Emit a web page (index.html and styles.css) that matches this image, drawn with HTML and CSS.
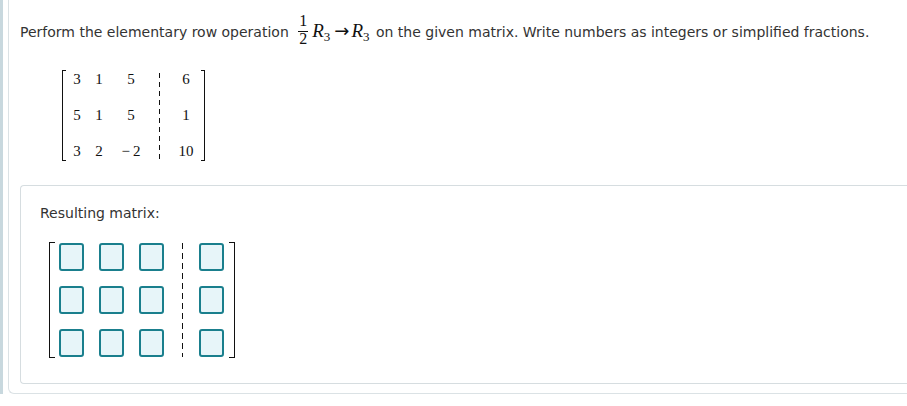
FILE: index.html
```html
<!DOCTYPE html>
<html>
<head>
<meta charset="utf-8">
<link rel="stylesheet" href="styles.css">
</head>
<body>
<div class="page">
  <div class="strip"></div>
  <div class="panel">
    <div class="question">Perform the elementary row operation <span class="frac"><span class="num">1</span><span class="den">2</span></span><span class="var">R</span><sub class="sub first">3</sub><span class="arrow">→</span><span class="var">R</span><sub class="sub second">3</sub> on the given matrix. Write numbers as integers or simplified fractions.</div>

    <div class="matrix given">
      <div class="bracket left"></div>
      <div class="mgrid">
        <span>3</span><span>1</span><span>5</span><span class="dash-cell"></span><span class="last">6</span>
        <span>5</span><span>1</span><span>5</span><span class="last">1</span>
        <span>3</span><span>2</span><span><span class="minus">−</span>2</span><span class="last">10</span>
      </div>
      <div class="bracket right"></div>
    </div>

    <div class="answer-box">
      <div class="label">Resulting matrix:</div>
      <div class="matrix result">
        <div class="bracket left"></div>
        <div class="rgrid">
          <span class="cell"></span><span class="cell"></span><span class="cell"></span><span class="rdash"></span><span class="cell"></span>
          <span class="cell"></span><span class="cell"></span><span class="cell"></span><span class="cell"></span>
          <span class="cell"></span><span class="cell"></span><span class="cell"></span><span class="cell"></span>
        </div>
        <div class="bracket right"></div>
      </div>
    </div>
  </div>
</div>
</body>
</html>
```

FILE: styles.css
```css
html, body {
  margin: 0;
  padding: 0;
  background: #ffffff;
  overflow: hidden;
}

.page {
  display: flex;
  width: 930px;
}

.strip {
  width: 3px;
  background: #c8d8de;
  flex: none;
}

.panel {
  flex: 1;
  margin-left: 5px;
  border-left: 1px solid #dbe2e5;
  border-bottom: 1px solid #dbe2e5;
  border-bottom-left-radius: 6px;
  padding: 0 0 9px 11px;
}

.question {
  font-family: "DejaVu Sans", Verdana, sans-serif;
  font-size: 14px;
  color: #333333;
  padding-top: 14px;
  line-height: 20px;
  white-space: nowrap;
}

.frac {
  display: inline-block;
  vertical-align: -7px;
  font-family: "Liberation Serif", "Times New Roman", serif;
  font-size: 16px;
  line-height: 14px;
  color: #111;
  text-align: center;
  margin: 0 4px 0 5px;
}

.frac .num {
  display: block;
  padding: 0 1px 3px;
  border-bottom: 1px solid #111;
}

.frac .den {
  display: block;
}

.var {
  font-family: "Liberation Serif", "Times New Roman", serif;
  font-style: italic;
  font-size: 19px;
  color: #111;
}

.sub {
  font-family: "Liberation Serif", "Times New Roman", serif;
  font-size: 13px;
  line-height: 0;
  vertical-align: -4px;
  color: #111;
}

.sub.first {
  margin-right: 4px;
}

.sub.second {
  margin-right: 2px;
}

.arrow {
  font-family: "DejaVu Sans", sans-serif;
  font-size: 18px;
  line-height: 0;
  color: #111;
  margin-right: 2px;
}

.matrix {
  display: flex;
  align-items: stretch;
}

.bracket {
  box-sizing: border-box;
  width: 4px;
  border-top: 1px solid #111;
  border-bottom: 1px solid #111;
  flex: none;
}

.bracket.left {
  border-left: 1px solid #111;
}

.bracket.right {
  border-right: 1px solid #111;
}

.given {
  margin-top: 24px;
  margin-left: 42px;
}

.mgrid {
  display: grid;
  grid-template-columns: 22px 22px 42px 14px 35px;
  grid-template-rows: repeat(3, 17px);
  row-gap: 19px;
  font-family: "Liberation Serif", "Times New Roman", serif;
  font-size: 15px;
  line-height: 17px;
  color: #111;
  margin: 1px 0;
}

.mgrid span {
  display: flex;
  align-items: center;
  justify-content: center;
}

.mgrid .minus {
  margin-right: 3px;
}

.mgrid .last {
  padding-left: 5px;
}

.mgrid .dash-cell {
  grid-column: 4;
  grid-row: 1 / span 3;
  justify-self: center;
  width: 1px;
  margin: 2px 0 1px;
  background: repeating-linear-gradient(to bottom, #111 0 5px, transparent 5px 9px);
}

.answer-box {
  margin-top: 24px;
  border: 1px solid #d6dde0;
  border-right: none;
  border-radius: 4px 0 0 4px;
  padding: 19px 0 25px 19px;
}

.label {
  font-family: "DejaVu Sans", Verdana, sans-serif;
  font-size: 14px;
  color: #333333;
  line-height: 16px;
}

.result {
  margin-top: 21px;
  margin-left: 9px;
  width: max-content;
}

.result .bracket {
  width: 6px;
}

.rgrid {
  display: grid;
  grid-template-columns: 25px 25px 25px 5px 25px;
  grid-template-rows: repeat(3, 28px);
  gap: 15px;
  margin: 1px 5px 1px 4px;
}

.cell {
  box-sizing: border-box;
  border: 2px solid #1a7f8d;
  border-radius: 3px;
  background: #e7f5f9;
}

.rdash {
  grid-column: 4;
  grid-row: 1 / span 3;
  justify-self: center;
  width: 1px;
  margin-left: 1px;
  background: repeating-linear-gradient(to bottom, #111 0 6px, transparent 6px 10px);
}
```
